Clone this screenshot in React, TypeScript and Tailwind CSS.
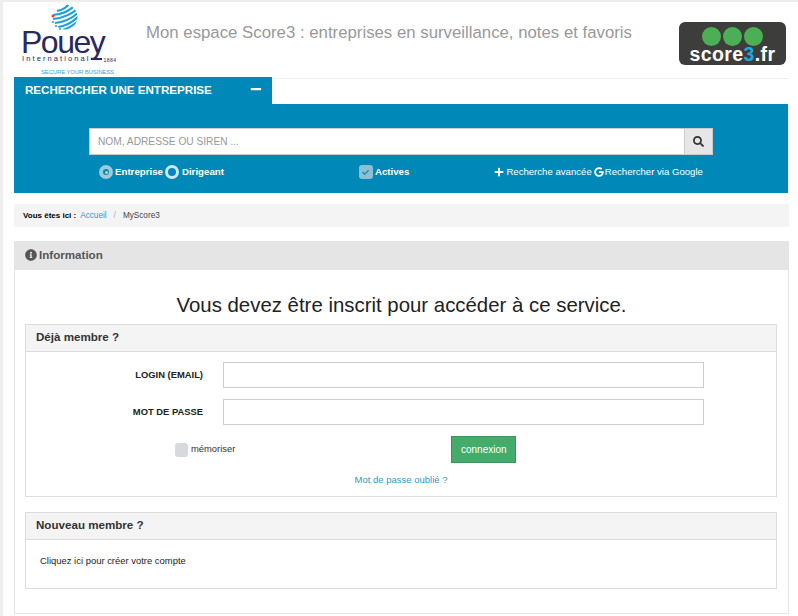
import React from "react";
import { FaInfoCircle, FaSearch, FaPlus, FaGoogle, FaCheck, FaMinus } from "react-icons/fa";

function Globe() {
  return (
    <svg width="27" height="27" viewBox="0 0 27 27" className="block">
      <defs>
        <clipPath id="g"><circle cx="14" cy="13" r="12.5" /></clipPath>
      </defs>
      <g clipPath="url(#g)" fill="none" stroke="#1a9fe0" strokeWidth="2.2">
        <path d="M6 7 C12 6 16 3 19 -1" />
        <path d="M2 11 C12 10 20 6 25 0" />
        <path d="M2 15 C13 14 23 9 28 3" />
        <path d="M4 19 C14 18 23 13 29 7" />
        <path d="M7 23 C15 22 23 17 29 11" />
        <path d="M12 26 C18 24 24 20 29 16" />
      </g>
      <circle cx="2" cy="12" r="1.6" fill="#e5483f" />
      <circle cx="2" cy="18" r="1" fill="#1a9fe0" />
      <circle cx="5" cy="22" r="1" fill="#1a9fe0" />
      <circle cx="9" cy="25" r="1" fill="#1a9fe0" />
    </svg>
  );
}

function Logo() {
  return (
    <div className="flex flex-col items-start w-[116px] h-[75px] shrink-0 font-['Liberation_Sans',sans-serif] text-[#28295f]">
      <div className="ml-[37px] mt-[2px]"><Globe /></div>
      <div className="ml-[7px] mt-[-1px] text-[32px] leading-[24px] tracking-[-1.5px]">Pouey</div>
      <div className="flex items-center ml-[8px] mt-[1px] h-[8px]">
        <span className="text-[7.5px] leading-[8px] tracking-[2.1px]">International</span>
        <span className="w-[11px] h-[2px] bg-[#28295f]" />
        <span className="text-[5px] leading-[6px] ml-[2px] tracking-[0.4px] mt-[1px]">1884</span>
      </div>
      <div className="ml-[27px] mt-[6px] text-[6px] leading-[7px] text-[#35a7dc] tracking-[-0.15px] whitespace-nowrap">SECURE YOUR BUSINESS</div>
    </div>
  );
}

function Score3() {
  return (
    <div className="w-[107px] h-[43px] rounded-[6px] bg-[#3d3d3b] flex flex-col items-center mt-[20px] mr-[1px] shrink-0">
      <div className="flex gap-[2px] mt-[5px]">
        <span className="w-[19px] h-[19px] rounded-full bg-[#4caf55]" />
        <span className="w-[19px] h-[19px] rounded-full bg-[#4caf55]" />
        <span className="w-[19px] h-[19px] rounded-full bg-[#4caf55]" />
      </div>
      <div className="text-white font-bold text-[19.5px] leading-[16px] tracking-[0.4px] font-['Liberation_Sans',sans-serif]">
        score<span className="text-[#1ea7e0]">3</span>.fr
      </div>
    </div>
  );
}

export default function App() {
  return (
    <div className="w-[798px] h-[616px] overflow-hidden bg-white font-['Liberation_Sans',Arial,sans-serif] text-[#222]">
      <div className="h-[2px] bg-[#eeeeee]" />
      <div className="flex h-[614px]">
        <div className="w-[3px] bg-[#eeeeee] shrink-0" />
        <div className="w-[775px] ml-[11px] shrink-0">
          {/* header */}
          <div className="flex h-[75px]">
            <Logo />
            <div className="text-[16.8px] leading-[20px] text-[#999] mt-[21px] ml-[16px] w-[533px] whitespace-nowrap">
              Mon espace Score3 : entreprises en surveillance, notes et favoris
            </div>
            <Score3 />
          </div>
          {/* tab */}
          <div className="flex h-[27px]">
            <div className="w-[258px] bg-[#0089b8] flex items-start justify-between pl-[11px] pr-[10px] pt-[5px] text-white">
              <span className="text-[11.6px] leading-[15px] font-bold">RECHERCHER UNE ENTREPRISE</span>
              <FaMinus className="text-[12px] mt-[1px]" />
            </div>
            <div className="flex-1 border-t border-[#f0f0f0] mt-[1px]" />
          </div>
          {/* search */}
          <div className="h-[89px] w-[774px] bg-[#0089b8] pt-[24px] pl-[75px]">
            <div className="flex w-[624px] h-[27px]">
              <input
                className="w-[596px] h-[27px] bg-white border border-[#ccc] px-[8px] text-[10.2px] outline-none placeholder:text-[#999]"
                placeholder="NOM, ADRESSE OU SIREN ..."
              />
              <div className="w-[28px] h-[27px] bg-[#e6e6e6] border border-[#ccc] border-l-0 flex items-center justify-center text-[#333]">
                <FaSearch className="text-[11px]" />
              </div>
            </div>
            <div className="flex items-center h-[14px] mt-[10px] text-white text-[9.7px] leading-[14px]">
              <span className="ml-[10px] w-[14px] h-[14px] rounded-full border-[4px] border-[#9fc9d9] flex items-center justify-center shrink-0">
                <span className="w-[3px] h-[3px] rounded-full bg-[#b7d8e4] shrink-0" />
              </span>
              <span className="ml-[2px] font-bold">Entreprise</span>
              <span className="ml-[2px] w-[14px] h-[14px] rounded-full border-[3px] border-[#cfe4ec] shrink-0" />
              <span className="ml-[3px] font-bold">Dirigeant</span>
              <span className="ml-[135px] w-[14px] h-[14px] rounded-[3px] bg-[#8ebfd1] flex items-center justify-center shrink-0">
                <FaCheck className="text-[7px] text-[#1f8db6]" />
              </span>
              <span className="ml-[2px] font-bold">Actives</span>
              <FaPlus className="ml-[85px] text-[10px] shrink-0" />
              <span className="ml-[2px] text-[9.6px] whitespace-nowrap">Recherche avancée</span>
              <FaGoogle className="ml-[2px] text-[10px] shrink-0" />
              <span className="ml-[1px] text-[9.6px] whitespace-nowrap">Rechercher via Google</span>
            </div>
          </div>
          {/* breadcrumb */}
          <div className="mt-[11px] h-[23px] bg-[#f4f4f4] flex items-center pl-[9px] whitespace-nowrap">
            <span className="text-[8.2px] leading-[12px]">
              <span className="font-bold text-black text-[8px]">Vous êtes ici :</span>
              <span className="ml-[4px] text-[#2d9cc6]">Accueil</span>
              <span className="ml-[7px] text-[#aaa]">/</span>
              <span className="ml-[7px] text-[#444]">MyScore3</span>
            </span>
          </div>
          {/* info panel */}
          <div className="mt-[14px] w-[775px] h-[373px] border border-[#e5e5e5]">
            <div className="h-[28px] bg-[#e5e5e5] flex items-center pl-[10px] pb-[2px] text-[#555] text-[11.6px] font-bold">
              <FaInfoCircle className="text-[12px] mr-[2px]" />
              Information
            </div>
            <h1 className="mt-[22px] text-center text-[20.4px] leading-[26px] text-[#222] font-normal">
              Vous devez être inscrit pour accéder à ce service.
            </h1>
            <div className="mt-[6px] ml-[10px] w-[752px] h-[173px] border border-[#ddd]">
              <div className="h-[27px] bg-[#f4f4f4] border-b border-[#ddd] flex items-center pl-[10px] pb-[2px] text-[11.6px] font-bold text-[#333]">
                Déjà membre ?
              </div>
              <div className="flex items-center mt-[10px] h-[26px]">
                <label className="w-[177px] text-right text-[9.4px] font-bold text-[#222]">LOGIN (EMAIL)</label>
                <input className="ml-[20px] w-[481px] h-[26px] border border-[#ccc] bg-white outline-none" />
              </div>
              <div className="flex items-center mt-[11px] h-[26px]">
                <label className="w-[177px] text-right text-[9.4px] font-bold text-[#222]">MOT DE PASSE</label>
                <input className="ml-[20px] w-[481px] h-[26px] border border-[#ccc] bg-white outline-none" />
              </div>
              <div className="flex items-center mt-[11px] h-[27px]">
                <span className="ml-[149px] w-[13px] h-[14px] rounded-[3px] bg-[#d5dadc] shrink-0" />
                <span className="ml-[3px] text-[9.4px] text-[#333]">mémoriser</span>
                <button className="ml-[216px] w-[65px] h-[27px] bg-[#43ac6a] border border-[#3a945b] text-white text-[10px]">connexion</button>
              </div>
              <div className="mt-[11px] text-center text-[9.5px] leading-[12px] text-[#2d9cc6]">Mot de passe oublié ?</div>
            </div>
            <div className="mt-[15px] ml-[10px] w-[752px] h-[77px] border border-[#ddd]">
              <div className="h-[27px] bg-[#f4f4f4] border-b border-[#ddd] flex items-center pl-[10px] pb-[2px] text-[11.6px] font-bold text-[#333]">
                Nouveau membre ?
              </div>
              <div className="mt-[15px] pl-[14px] text-[9.45px] leading-[12px] text-[#222]">Cliquez ici pour créer votre compte</div>
            </div>
          </div>
        </div>
      </div>
    </div>
  );
}
